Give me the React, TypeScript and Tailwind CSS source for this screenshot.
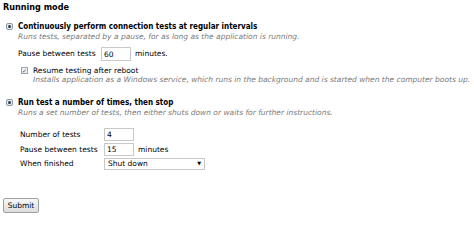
import React from 'react';

const Radio = () => (
    <span className="mt-[1px] flex h-[7px] w-[7px] shrink-0 items-center justify-center rounded-[2px] border border-[#8a98a8] bg-[#e4e9ef]">
        <span className="h-[3px] w-[3px] rounded-full bg-[#2b3a4a]" />
    </span>
);

const Check = () => (
    <span className="mt-[1px] flex h-[7px] w-[7px] shrink-0 items-center justify-center border border-[#9aa6b4] bg-[#eef1f5] text-[6px] leading-none text-[#3a4a6a]">
        ✓
    </span>
);

const App = () => {
    return (
        <div className="h-[218px] w-[474px] overflow-hidden bg-white pl-[3px] pt-[1px] text-black [font-family:'DejaVu_Sans',Verdana,sans-serif]">
            {/* title */}
            <h3 className="text-[9px] font-bold leading-[12px] [font-family:'DejaVu_Sans_Condensed','DejaVu_Sans',sans-serif]">
                Running mode
            </h3>

            {/* continuous mode */}
            <div className="mt-[9px] flex items-start gap-[5px] pl-[3px]">
                <Radio />
                <div>
                    <p className="text-[8px] font-bold leading-[10px] [font-family:'DejaVu_Sans_Condensed','DejaVu_Sans',sans-serif]">
                        Continuously perform connection tests at regular intervals
                    </p>
                    <p className="whitespace-nowrap text-[7.5px] italic leading-[10px] text-[#7a7a7a]">
                        Runs tests, separated by a pause, for as long as the application is running.
                    </p>
                    <div className="mt-[5px] flex items-center text-[7.5px]">
                        <span className="w-[83px]">Pause between tests</span>
                        <input
                            className="h-[14px] w-[30px] border border-[#c8c8c8] px-[2px] text-[7.5px] outline-none"
                            defaultValue="60"
                        />
                        <span className="ml-[4px]">minutes.</span>
                    </div>
                    <div className="mt-[5px] flex items-start gap-[5px] pl-[3px]">
                        <Check />
                        <div>
                            <p className="text-[7.5px] leading-[9px]">Resume testing after reboot</p>
                            <p className="whitespace-nowrap text-[7.5px] italic leading-[10px] text-[#7a7a7a]">
                                Installs application as a Windows service, which runs in the background and is started when the computer boots up.
                            </p>
                        </div>
                    </div>
                </div>
            </div>

            {/* fixed count mode */}
            <div className="mt-[13px] flex items-start gap-[5px] pl-[3px]">
                <Radio />
                <div>
                    <p className="text-[8px] font-bold leading-[10px] [font-family:'DejaVu_Sans_Condensed','DejaVu_Sans',sans-serif]">
                        Run test a number of times, then stop
                    </p>
                    <p className="whitespace-nowrap text-[7.5px] italic leading-[10px] text-[#7a7a7a]">
                        Runs a set number of tests, then either shuts down or waits for further instructions.
                    </p>
                    <div className="mt-[10px] grid grid-cols-[84px_auto] items-center gap-y-[2px] pl-[2px] text-[7.5px]">
                        <span>Number of tests</span>
                        <input
                            className="h-[13px] w-[30px] border border-[#c8c8c8] px-[2px] text-[7.5px] outline-none"
                            defaultValue="4"
                        />
                        <span>Pause between tests</span>
                        <div className="flex items-center">
                            <input
                                className="h-[13px] w-[30px] border border-[#c8c8c8] px-[2px] text-[7.5px] outline-none"
                                defaultValue="15"
                            />
                            <span className="ml-[4px]">minutes</span>
                        </div>
                        <span>When finished</span>
                        <div className="flex h-[12px] w-[101px] items-center justify-between border border-[#c8c8c8] px-[3px]">
                            <span>Shut down</span>
                            <span className="text-[5px]">▼</span>
                        </div>
                    </div>
                </div>
            </div>

            <button className="mt-[28px] h-[15px] w-[36px] rounded-[2px] border border-[#a0a0a0] bg-gradient-to-b from-[#f8f8f8] to-[#dcdcdc] text-[7.5px] leading-none">
                Submit
            </button>
        </div>
    );
};

export default App;
